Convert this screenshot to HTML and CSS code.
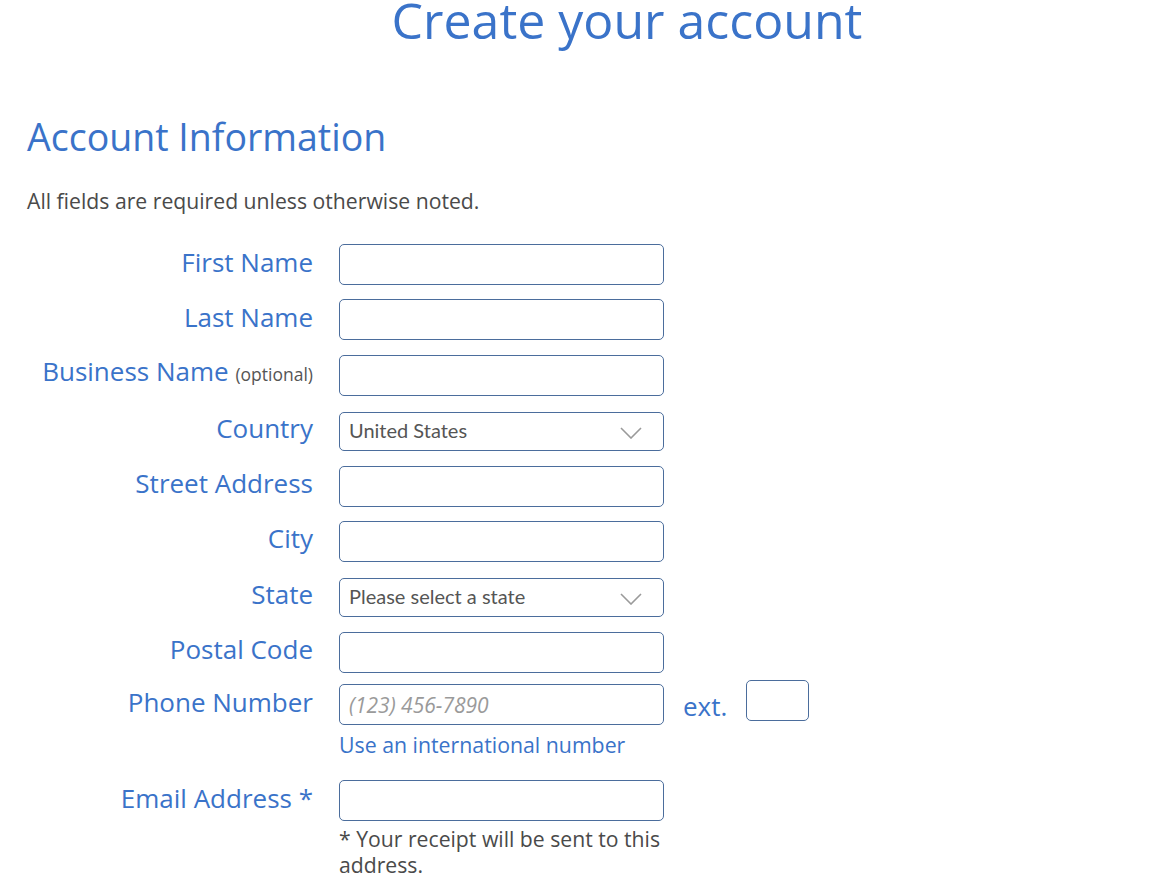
FILE: index.html
```html
<!DOCTYPE html>
<html lang="en">
<head>
<meta charset="utf-8">
<title>Create your account</title>
<link rel="stylesheet" href="styles.css">
</head>
<body>
<div class="page">
  <h1 class="title">Create your account</h1>
  <h2 class="section-title">Account Information</h2>
  <p class="note">All fields are required unless otherwise noted.</p>
  <form class="form">
    <div class="row">
      <label class="label">First Name</label>
      <input class="field" type="text">
    </div>
    <div class="row">
      <label class="label">Last Name</label>
      <input class="field" type="text">
    </div>
    <div class="row">
      <label class="label">Business Name <span class="optional">(optional)</span></label>
      <input class="field" type="text">
    </div>
    <div class="row">
      <label class="label">Country</label>
      <div class="select">
        <span class="select-text">United States</span>
        <svg class="chevron" width="22" height="12" viewBox="0 0 22 12"><path d="M1 1 L11 11 L21 1" fill="none" stroke="#9a9a9a" stroke-width="1.6"/></svg>
      </div>
    </div>
    <div class="row">
      <label class="label">Street Address</label>
      <input class="field" type="text">
    </div>
    <div class="row">
      <label class="label">City</label>
      <input class="field" type="text">
    </div>
    <div class="row">
      <label class="label">State</label>
      <div class="select">
        <span class="select-text">Please select a state</span>
        <svg class="chevron" width="22" height="12" viewBox="0 0 22 12"><path d="M1 1 L11 11 L21 1" fill="none" stroke="#9a9a9a" stroke-width="1.6"/></svg>
      </div>
    </div>
    <div class="row">
      <label class="label">Postal Code</label>
      <input class="field" type="text">
    </div>
    <div class="row row-phone">
      <label class="label">Phone Number</label>
      <input class="field" type="text" placeholder="(123) 456-7890">
      <span class="ext-label">ext.</span>
      <input class="field ext" type="text">
    </div>
    <div class="row row-hint">
      <span></span>
      <a class="hint-link" href="#">Use an international number</a>
    </div>
    <div class="row row-email">
      <label class="label">Email Address *</label>
      <input class="field" type="text">
    </div>
    <div class="row row-hint">
      <span></span>
      <p class="receipt">* Your receipt will be sent to this address.</p>
    </div>
  </form>
</div>
</body>
</html>
```

FILE: styles.css
```css
html, body {
  margin: 0;
  padding: 0;
  background: #ffffff;
}

body {
  font-family: "Open Sans", "DejaVu Sans", sans-serif;
  overflow: hidden;
}

.page {
  padding-left: 27px;
}

.title {
  margin: 0;
  font-size: 50px;
  line-height: 40px;
  font-weight: 400;
  color: #3a73c9;
  text-align: center;
  padding-left: 67px;
  white-space: nowrap;
}

.section-title {
  margin: 77px 0 0 0;
  font-size: 37.5px;
  line-height: 40px;
  font-weight: 400;
  color: #3a73c9;
}

.note {
  margin: 29px 0 0 0;
  font-size: 21.2px;
  line-height: 30px;
  color: #4a4a4a;
}

.form {
  margin-top: 28px;
}

.row {
  display: grid;
  grid-template-columns: 286px 325px auto auto;
  justify-content: start;
  column-gap: 26px;
  align-items: center;
  margin-bottom: 14.4px;
}

.label {
  text-align: right;
  font-size: 26px;
  line-height: 30px;
  color: #3a73c9;
  white-space: nowrap;
  margin-top: -6px;
}

.optional {
  font-size: 17.5px;
  color: #555555;
}

.field {
  box-sizing: border-box;
  width: 325px;
  height: 41px;
  margin: 0;
  border: 1px solid #4b6d9c;
  border-radius: 5px;
  background: #fff;
  padding: 0 9px;
  font-family: "Open Sans", sans-serif;
  font-size: 21px;
  outline: none;
}

.field::placeholder {
  color: #9a9a9a;
  font-style: italic;
}

.select {
  box-sizing: border-box;
  width: 325px;
  height: 39px;
  margin-top: 2px;
  border: 1px solid #4b6d9c;
  border-radius: 5px;
  display: flex;
  align-items: center;
  justify-content: space-between;
  padding: 0 21px 0 9px;
}

.select-text {
  font-family: "Lato", "Liberation Sans", sans-serif;
  font-size: 20px;
  color: #555555;
  margin-top: -3px;
}

.chevron {
  display: block;
  margin-top: 2px;
}

.row-phone {
  margin-top: -3px;
  margin-bottom: 0;
}

.ext-label {
  font-size: 26px;
  color: #3a73c9;
  margin-left: -7px;
  margin-top: 2px;
}

.field.ext {
  width: 63px;
  margin-left: -7px;
  margin-top: -8px;
}

.row-hint {
  margin-bottom: 0;
}

.hint-link {
  font-size: 21.3px;
  line-height: 30px;
  color: #3a73c9;
  text-decoration: none;
  white-space: nowrap;
  margin-top: 5px;
}

.row-email {
  margin-top: 20px;
  margin-bottom: 5px;
}

.receipt {
  margin: 0;
  font-size: 21.2px;
  line-height: 26px;
  color: #4a4a4a;
}
```
